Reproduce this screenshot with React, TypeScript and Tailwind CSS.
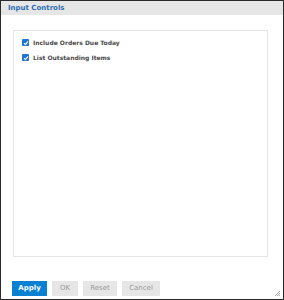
import React from "react";

function Check() {
  return (
    <span className="w-[7px] h-[7px] bg-[#1f73d1] rounded-[1px] flex items-center justify-center shrink-0">
      <svg width="6" height="6" viewBox="0 0 6 6">
        <path d="M1 3.2 L2.4 4.6 L5 1.4" stroke="white" strokeWidth="1.1" fill="none" />
      </svg>
    </span>
  );
}

export default function App() {
  return (
    <div
      className="w-[284px] h-[300px] border border-[#2a2a2a] bg-white flex flex-col relative"
      style={{ fontFamily: '"DejaVu Sans", Verdana, sans-serif' }}
    >
      <div className="h-[14px] bg-[#e6e6e6] flex items-center pl-[7px] text-[7px] font-bold text-[#2d6db4]">
        Input Controls
      </div>
      <div className="ml-[12px] mr-[15px] mt-[15px] h-[227px] border border-[#e4e4e4] pt-[8px] pl-[8px] flex flex-col gap-[8px]">
        <div className="flex items-center gap-[4px] h-[7px] text-[6px] leading-[7px] font-bold text-[#4a4a4a]">
          <Check />
          <span>Include Orders Due Today</span>
        </div>
        <div className="flex items-center gap-[4px] h-[7px] text-[6px] leading-[7px] font-bold text-[#4a4a4a]">
          <Check />
          <span>List Outstanding Items</span>
        </div>
      </div>
      <div className="flex ml-[11px] mt-[24px] gap-[5px] text-[7px]">
        <div className="w-[35px] h-[15px] bg-[#0a80d2] text-white font-bold flex items-center justify-center">Apply</div>
        <div className="w-[26px] h-[15px] bg-[#e6e6e6] text-[#9a9a9a] flex items-center justify-center">OK</div>
        <div className="w-[34px] h-[15px] bg-[#e6e6e6] text-[#9a9a9a] flex items-center justify-center">Reset</div>
        <div className="w-[38px] h-[15px] bg-[#e6e6e6] text-[#9a9a9a] flex items-center justify-center">Cancel</div>
      </div>
      <svg className="absolute right-[2px] bottom-[2px]" width="7" height="7" viewBox="0 0 7 7">
        <path d="M6 1 L1 6 M6 3 L3 6 M6 5 L5 6" stroke="#aaa" strokeWidth="1" />
      </svg>
    </div>
  );
}
